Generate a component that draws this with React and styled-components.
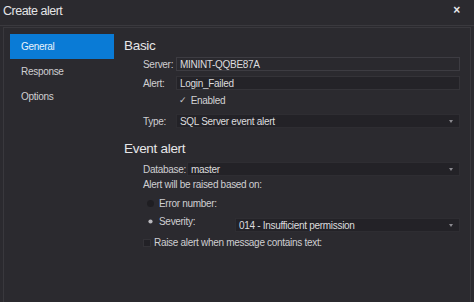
import React from "react";
import styled, { createGlobalStyle } from "styled-components";

const Global = createGlobalStyle`
  html, body {
    margin: 0;
    padding: 0;
    background: #2b2a2f;
  }
  body {
    font-family: "Liberation Sans", Arial, sans-serif;
    color: #d6d6d8;
    letter-spacing: -0.3px;
  }
`;

const Window = styled.div`
  width: 474px;
  height: 302px;
  background: #2b2a2f;
  display: flex;
  flex-direction: column;
  overflow: hidden;
`;

const TitleBar = styled.div`
  height: 26px;
  border-bottom: 1px solid #3a393e;
  display: flex;
  align-items: center;
  justify-content: space-between;
  padding: 0 14px 0 3px;
  box-sizing: border-box;
  flex-shrink: 0;
`;

const Title = styled.div`
  font-size: 12.5px;
  letter-spacing: -0.5px;
  color: #e4e4e6;
  margin-top: -3px;
`;

const Close = styled.div`
  font-size: 12px;
  font-weight: bold;
  color: #e8e8ea;
  margin-top: -5px;
`;

const Body = styled.div`
  flex: 1;
  padding: 1px 3px 0 3px;
  display: flex;
`;

const Panel = styled.div`
  flex: 1;
  border: 1px solid #39383d;
  border-bottom: none;
  display: flex;
`;

const Sidebar = styled.div`
  width: 120px;
  padding: 6px 10px 0 6px;
  box-sizing: border-box;
  display: flex;
  flex-direction: column;
`;

const NavItem = styled.div`
  height: 25px;
  display: flex;
  align-items: center;
  padding-left: 11px;
  font-size: 10px;
  color: ${(p) => (p.$active ? "#e8f2fb" : "#cfcfd2")};
  background: ${(p) => (p.$active ? "#0a7bd6" : "transparent")};
`;

const Content = styled.div`
  flex: 1;
  padding: 9px 10px 0 0;
  display: flex;
  flex-direction: column;
`;

const Heading = styled.div`
  font-size: 13.5px;
  letter-spacing: -0.3px;
  line-height: 17px;
  color: #e6e6e8;
  margin-top: ${(p) => p.$top || 0}px;
`;

const Group = styled.div`
  padding-left: 19px;
  display: flex;
  flex-direction: column;
`;

const Row = styled.div`
  display: flex;
  align-items: center;
  height: 14px;
  margin-top: ${(p) => p.$top || 0}px;
`;

const Label = styled.div`
  width: ${(p) => p.$w}px;
  flex-shrink: 0;
  font-size: 10px;
  color: #cfcfd2;
`;

const Input = styled.div`
  flex: 1;
  height: 14px;
  box-sizing: border-box;
  border: 1px solid ${(p) => (p.$readonly ? "#3d3c42" : "#343338")};
  background: ${(p) => (p.$readonly ? "#2a292e" : "#242328")};
  font-size: 10px;
  color: #dcdcde;
  padding-left: 3px;
  display: flex;
  align-items: center;
`;

const Select = styled(Input)`
  position: relative;
  border-color: #2e2d32;
  background: #232227;
  margin-top: ${(p) => p.$top || 0}px;
  &::after {
    content: "";
    position: absolute;
    right: 6px;
    top: 5px;
    border-left: 2.5px solid transparent;
    border-right: 2.5px solid transparent;
    border-top: 3px solid #8b8a90;
  }
`;

const Text = styled.div`
  font-size: 10px;
  color: #cfcfd2;
  line-height: 13px;
  margin-top: ${(p) => p.$top || 0}px;
`;

const Check = styled.div`
  margin-left: 36px;
  display: flex;
  align-items: center;
  gap: 4px;
  font-size: 10px;
  color: #d2d2d4;
`;

const Tick = styled.span`
  font-size: 9px;
  color: #c8c8ca;
`;

const OptionRow = styled.div`
  display: flex;
  align-items: flex-start;
  margin-top: ${(p) => p.$top || 0}px;
  padding-left: ${(p) => p.$indent || 0}px;
`;

const Radio = styled.div`
  width: 7px;
  height: 7px;
  border-radius: 50%;
  background: ${(p) => (p.$checked ? "#b9b8bd" : "#1f1e22")};
  transform: ${(p) => (p.$checked ? "scale(0.6)" : "none")};
  margin: 3px 5px 0 0;
  flex-shrink: 0;
`;

const Box = styled.div`
  width: 8px;
  height: 8px;
  background: #222126;
  border: 1px solid #333237;
  box-sizing: border-box;
  margin: 3px 3px 0 0;
  flex-shrink: 0;
`;

const OptionLabel = styled.div`
  font-size: 10px;
  line-height: 13px;
  color: #cfcfd2;
  width: ${(p) => (p.$w ? `${p.$w}px` : "auto")};
  flex-shrink: 0;
`;

export default function App() {
  return (
    <>
      <Global />
      <Window>
        <TitleBar>
          <Title>Create alert</Title>
          <Close>×</Close>
        </TitleBar>
        <Body>
          <Panel>
            <Sidebar>
              <NavItem $active>General</NavItem>
              <NavItem>Response</NavItem>
              <NavItem>Options</NavItem>
            </Sidebar>
            <Content>
              <Heading>Basic</Heading>
              <Group>
                <Row $top={3}>
                  <Label $w={33}>Server:</Label>
                  <Input $readonly>MININT-QQBE87A</Input>
                </Row>
                <Row $top={5}>
                  <Label $w={33}>Alert:</Label>
                  <Input>Login_Failed</Input>
                </Row>
                <Row $top={3}>
                  <Check>
                    <Tick>✓</Tick>
                    Enabled
                  </Check>
                </Row>
                <Row $top={7}>
                  <Label $w={33}>Type:</Label>
                  <Select>SQL Server event alert</Select>
                </Row>
              </Group>
              <Heading $top={12}>Event alert</Heading>
              <Group>
                <Row $top={5}>
                  <Label $w={44}>Database:</Label>
                  <Select>master</Select>
                </Row>
                <Text $top={2}>Alert will be raised based on:</Text>
                <OptionRow $top={6} $indent={4}>
                  <Radio />
                  <OptionLabel>Error number:</OptionLabel>
                </OptionRow>
                <OptionRow $top={5} $indent={4}>
                  <Radio $checked />
                  <OptionLabel $w={76}>Severity:</OptionLabel>
                  <Select $top={3}>014 - Insufficient permission</Select>
                </OptionRow>
                <OptionRow $top={4}>
                  <Box />
                  <OptionLabel>Raise alert when message contains text:</OptionLabel>
                </OptionRow>
              </Group>
            </Content>
          </Panel>
        </Body>
      </Window>
    </>
  );
}
